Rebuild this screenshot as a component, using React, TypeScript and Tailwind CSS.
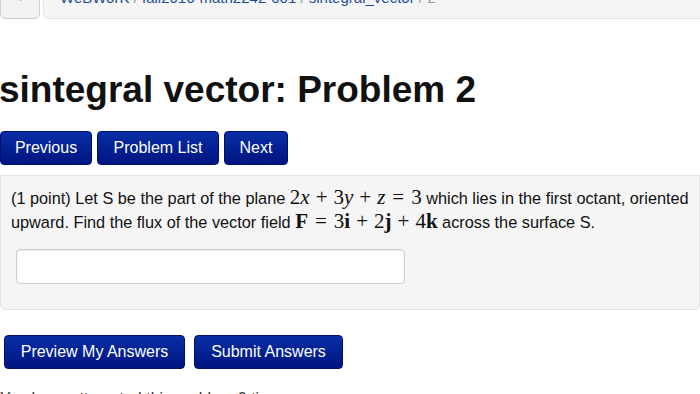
import React from 'react'

const sans = { fontFamily: '"Liberation Sans", Arial, sans-serif' }

function NavButton({ label, className = '' }: { label: string; className?: string }) {
  return (
    <button
      className={`h-[34px] rounded-[4px] border border-[#00106a] bg-gradient-to-b from-[#0a2ea6] to-[#001480] text-white text-[16px] leading-none ${className}`}
    >
      {label}
    </button>
  )
}

function M({ children }: { children: React.ReactNode }) {
  return (
    <span className="text-[21px]" style={{ fontFamily: '"Liberation Serif", "DejaVu Serif", serif' }}>
      {children}
    </span>
  )
}

const I = ({ children }: { children: React.ReactNode }) => <i>{children}</i>
const Op = ({ children }: { children: React.ReactNode }) => <span className="px-[6px]">{children}</span>
const Eq = ({ children }: { children: React.ReactNode }) => <span className="px-[7px]">{children}</span>

export default function App() {
  return (
    <div className="w-[700px] h-[394px] overflow-hidden bg-white text-[#111]" style={sans}>
      {/* Breadcrumb bar, scrolled mostly out of view */}
      <div className="flex gap-[3px] -mt-[18px]">
        <div className="w-[40px] h-[37px] shrink-0 rounded-b-[5px] border border-[#cfcfcf] bg-[#f2f2f2] flex items-end justify-center pb-[15px]">
          <span className="text-[#333] text-[10px] leading-none">▾</span>
        </div>
        <div className="flex-1 h-[37px] rounded-bl-[5px] border-b border-l border-[#e4e4e4] bg-[#f5f5f5] pl-[16px] pt-[6px] text-[15px] leading-[20px] whitespace-nowrap">
          <span className="text-[#1f4d99]">WeBWorK</span>
          <span className="text-[#999]"> / </span>
          <span className="text-[#1f4d99]">fall2016-math2242-001</span>
          <span className="text-[#999]"> / </span>
          <span className="text-[#1f4d99]">sintegral_vector</span>
          <span className="text-[#999]"> / 2</span>
        </div>
      </div>

      {/* Title */}
      <h2 className="mt-[50px] -ml-[1px] text-[37px] font-bold leading-[42px] text-[#111] whitespace-nowrap">
        sintegral vector: Problem 2
      </h2>

      {/* Navigation */}
      <div className="mt-[20px] flex gap-[5px]">
        <NavButton label="Previous" className="w-[92px]" />
        <NavButton label="Problem List" className="w-[122px]" />
        <NavButton label="Next" className="w-[64px]" />
      </div>

      {/* Problem */}
      <div className="mt-[10px] h-[135px] rounded-b-[5px] border border-[#e3e3e3] bg-[#f5f5f5] pl-[10px] pt-[10px]">
        <p className="text-[16.3px] leading-[23px] text-[#111] whitespace-nowrap">
          (1 point) Let S be the part of the plane{' '}
          <M>
            2<I>x</I>
            <Op>+</Op>3<I>y</I>
            <Op>+</Op>
            <I>z</I>
            <Eq>=</Eq>3
          </M>{' '}
          which lies in the first octant, oriented
          <br />
          upward. Find the flux of the vector field{' '}
          <M>
            <b>F</b>
            <Eq>=</Eq>3<b>i</b>
            <Op>+</Op>2<b>j</b>
            <Op>+</Op>4<b>k</b>
          </M>{' '}
          across the surface S.
        </p>
        <input
          type="text"
          className="mt-[15px] ml-[5px] block w-[389px] h-[35px] rounded-[4px] border border-[#cccccc] bg-white shadow-[inset_0_1px_2px_rgba(0,0,0,0.08)]"
        />
      </div>

      {/* Submit */}
      <div className="mt-[25px] pl-[4px] flex gap-[9px]">
        <NavButton label="Preview My Answers" className="w-[181px]" />
        <NavButton label="Submit Answers" className="w-[149px]" />
      </div>

      <p className="mt-[20px] text-[16px] leading-[20px] text-[#333] whitespace-nowrap">
        You have attempted this problem 0 times.
      </p>
    </div>
  )
}
